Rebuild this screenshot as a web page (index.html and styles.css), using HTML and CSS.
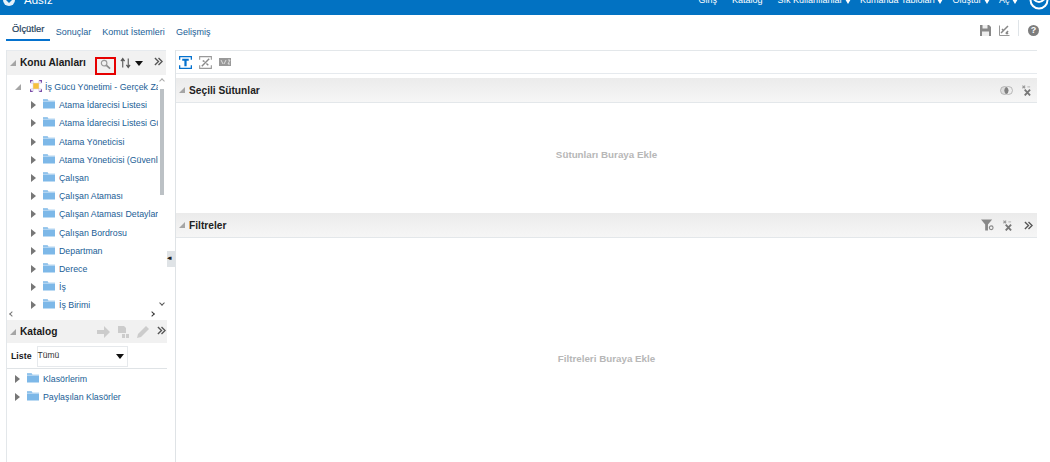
FILE: index.html
```html
<!DOCTYPE html>
<html lang="tr">
<head>
<meta charset="utf-8">
<title>Adsız</title>
<link rel="stylesheet" href="styles.css">
</head>
<body>
<svg class="defs" width="0" height="0">
  <symbol id="folder" viewBox="0 0 13 11"><path d="M0 1h5l1 1.500h7V11H0z" fill="#7db8e8"/><path d="M0 2.500h13v1H0z" fill="#cfe4f6"/></symbol>
  <symbol id="clear" viewBox="0 0 10 12"><path d="M.5 .5l3 3M3.500 .5l-3 3" stroke="#999" stroke-width="1.200" fill="none"/><path d="M3 5l6 6.500M9 5l-6 6.500" stroke="#777" stroke-width="2" fill="none"/><path d="M6 2h3" stroke="#aaa"/></symbol>
  <symbol id="dbl" viewBox="0 0 10 10"><path d="M1 1l4 4-4 4M5 1l4 4-4 4" stroke="#555" stroke-width="1.500" fill="none"/></symbol>
</svg>
<header class="topbar">
  <div class="brand"><svg class="logo" viewBox="0 0 12 12"><circle cx="6" cy="6" r="6" fill="#e4f0f9"/><path d="M3 6l3 3 3-3z" fill="#0272c2"/></svg><span class="title">Adsız</span></div>
  <nav class="topnav">
    <span class="plain">Giriş</span><span class="plain">Katalog</span><span>Sık Kullanılanlar <i class="dn"></i></span><span>Kumanda Tabloları <i class="dn"></i></span><span>Oluştur <i class="dn"></i></span><span>Aç <i class="dn"></i></span>
    <svg class="user" viewBox="0 0 20 20"><circle cx="10" cy="6" r="8.500" fill="none" stroke="#fff" stroke-width="2"/><path d="M4.500 5q5.500 6 11 0" fill="none" stroke="#fff" stroke-width="2"/></svg>
  </nav>
</header>
<div class="tabbar">
  <div class="tabs"><span class="tab on">Ölçütler</span><span class="tab">Sonuçlar</span><span class="tab">Komut İstemleri</span><span class="tab">Gelişmiş</span></div>
  <div class="tabtools">
    <svg class="ic" viewBox="0 0 11 11"><path d="M0 0h9l2 2v9H0z" fill="#888"/><path d="M2.500 0h5v3.500h-5zM2 6.500h7V11H2z" fill="#eee"/></svg>
    <svg class="ic ic2" viewBox="0 0 11 11"><path d="M.5.500v10h10" fill="none" stroke="#999"/><path d="M2 8l7-7M3 4l1 1M7 7l2 2M9 6l-2 3" stroke="#888" stroke-width="1.500" fill="none"/></svg>
    <span class="sep"></span>
    <span class="help">?</span>
  </div>
</div>
<main class="main">
  <aside class="side">
    <div class="phead">
      <span class="tri"></span><span class="ptitle">Konu Alanları</span>
      <span class="search"><svg viewBox="0 0 12 12"><circle cx="4.500" cy="4.500" r="3" fill="none" stroke="#999" stroke-width="1.300"/><path d="M7 7l4 3.500" stroke="#888" stroke-width="1.800"/></svg></span>
      <svg class="sort" viewBox="0 0 12 12"><path d="M3 11V2M1 4l2-3 2 3M9 1v9M7 8l2 3 2-3" fill="none" stroke="#555" stroke-width="1.200"/></svg>
      <i class="dnk"></i>
      <svg class="dbl" ><use href="#dbl"/></svg>
    </div>
    <div class="treebox">
      <div class="tree">
        <div class="row root"><span class="tri"></span><svg class="cube" viewBox="0 0 13 13"><path d="M.5 3V.500H3M10 .500h2.500V3M.5 10v2.500H3M10 12.500h2.500V10" fill="none" stroke="#7b4fa8" stroke-width="1.500"/><path d="M.5 3.500h12M.5 9.500h12M3.500 .5v12M9.500 .5v12" stroke="#c9b6de" stroke-width=".6"/><path d="M3.500 3.500h6v6h-6z" fill="#f5c13d"/></svg><span class="lbl">İş Gücü Yönetimi - Gerçek Zamanlı</span></div>
        <div class="row"><i class="exp"></i><svg class="fold"><use href="#folder"/></svg><span class="lbl">Atama İdarecisi Listesi</span></div>
        <div class="row"><i class="exp"></i><svg class="fold"><use href="#folder"/></svg><span class="lbl">Atama İdarecisi Listesi Güvenli</span></div>
        <div class="row"><i class="exp"></i><svg class="fold"><use href="#folder"/></svg><span class="lbl">Atama Yöneticisi</span></div>
        <div class="row"><i class="exp"></i><svg class="fold"><use href="#folder"/></svg><span class="lbl">Atama Yöneticisi (Güvenli Liste)</span></div>
        <div class="row"><i class="exp"></i><svg class="fold"><use href="#folder"/></svg><span class="lbl">Çalışan</span></div>
        <div class="row"><i class="exp"></i><svg class="fold"><use href="#folder"/></svg><span class="lbl">Çalışan Ataması</span></div>
        <div class="row"><i class="exp"></i><svg class="fold"><use href="#folder"/></svg><span class="lbl">Çalışan Ataması Detayları</span></div>
        <div class="row"><i class="exp"></i><svg class="fold"><use href="#folder"/></svg><span class="lbl">Çalışan Bordrosu</span></div>
        <div class="row"><i class="exp"></i><svg class="fold"><use href="#folder"/></svg><span class="lbl">Departman</span></div>
        <div class="row"><i class="exp"></i><svg class="fold"><use href="#folder"/></svg><span class="lbl">Derece</span></div>
        <div class="row"><i class="exp"></i><svg class="fold"><use href="#folder"/></svg><span class="lbl">İş</span></div>
        <div class="row"><i class="exp"></i><svg class="fold"><use href="#folder"/></svg><span class="lbl">İş Birimi</span></div>
      </div>
      <div class="vscroll"><span class="up"></span><span class="thumb"></span><span class="down"></span></div>
    </div>
    <div class="hscroll"><span class="lt"></span><span class="rt"></span></div>
    <div class="phead cat">
      <span class="tri"></span><span class="ptitle">Katalog</span>
      <svg class="cti first" viewBox="0 0 13 12"><path d="M0 4h7V0l6 6-6 6V8H0z" fill="#ccc"/></svg>
      <svg class="cti" viewBox="0 0 13 12"><path d="M1 0h6l2 2v5H1zM5 8h3v4H5zM9 8h3v4H9z" fill="#ccc"/></svg>
      <svg class="cti" viewBox="0 0 13 12"><path d="M9 0l3 3-8 8-4 1 1-4z" fill="#ccc"/></svg>
      <svg class="dbl"><use href="#dbl"/></svg>
    </div>
    <div class="listrow"><b>Liste</b><div class="select"><span>Tümü</span><i class="dnk"></i></div></div>
    <div class="cattree">
      <div class="row"><i class="exp"></i><svg class="fold"><use href="#folder"/></svg><span class="lbl">Klasörlerim</span></div>
      <div class="row"><i class="exp"></i><svg class="fold"><use href="#folder"/></svg><span class="lbl">Paylaşılan Klasörler</span></div>
    </div>
    <span class="splitter"></span>
  </aside>
  <section class="content">
    <div class="toolbar">
      <svg class="tb" viewBox="0 0 14 14"><path d="M.7 4V.700h12.600V4M.7 10v3.300h12.600V10" fill="none" stroke="#0572ce" stroke-width="1.400"/><path d="M3.500 3h7v2.200H8.200V11H5.800V5.200H3.500z" fill="#0572ce"/></svg>
      <svg class="tb" viewBox="0 0 14 14"><path d="M.7 4V.700h12.600V4M.7 10v3.300h12.600V10" fill="none" stroke="#999" stroke-width="1.200"/><path d="M3 11l8-8M4 5l2 1M8 8l2 2" stroke="#888" stroke-width="1.500" fill="none"/></svg>
      <svg class="tb small" viewBox="0 0 12 8"><path d="M0 0h12v8H0z" fill="#999"/><path d="M2 2l2 4M7 2L5 6M9 2h2L9 6h2" stroke="#eee" stroke-width=".8" fill="none"/></svg>
    </div>
    <div class="sechead first-sec">
      <span class="tri"></span><span class="ptitle">Seçili Sütunlar</span>
      <span class="secicons"><svg class="eye" viewBox="0 0 13 9"><circle cx="4.500" cy="4.500" r="4" fill="#ddd" stroke="#aaa" stroke-width=".8"/><circle cx="8.500" cy="4.500" r="4" fill="#eee" stroke="#aaa" stroke-width=".8"/><path d="M6.500 1a4 4 0 0 1 0 7a4 4 0 0 1 0-7z" fill="#808080"/></svg><svg class="clr"><use href="#clear"/></svg></span>
    </div>
    <div class="drop d1">Sütunları Buraya Ekle</div>
    <div class="sechead">
      <span class="tri"></span><span class="ptitle">Filtreler</span>
      <span class="secicons"><svg class="flt" viewBox="0 0 14 12"><path d="M0 0h12L7.500 5.500V12h-3V5.500z" fill="#888"/><circle cx="11" cy="9" r="2" fill="none" stroke="#888" stroke-width="1.200"/></svg><svg class="clr"><use href="#clear"/></svg><svg class="dbl"><use href="#dbl"/></svg></span>
    </div>
    <div class="drop d2">Filtreleri Buraya Ekle</div>
  </section>
</main>
</body>
</html>
```
FILE: styles.css
```css
* { box-sizing: border-box; }
html, body { margin: 0; height: 462px; overflow: hidden; background: #fff; }
body { font-family: "Liberation Sans", Arial, sans-serif; color: #145c9e; font-size: 10px; }
.defs { position: absolute; }
i { display: inline-block; }

.topbar { height: 15px; background: #0272c2; color: #fff; display: flex; justify-content: space-between; overflow: hidden; padding: 0 1px 0 3px; }
.brand { display: flex; align-items: flex-end; gap: 9px; height: 6px; }
.logo { width: 12px; height: 12px; flex: none; }
.title { font-size: 11.500px; line-height: 13px; flex: none; margin-bottom: -1px; }
.topnav { display: flex; gap: 9px; font-size: 9px; line-height: 12px; height: 6px; align-items: flex-end; }
.topnav span { white-space: nowrap; }
.topnav .plain { margin-right: 6px; }
.dn { width: 0; height: 0; border: 3px solid transparent; border-top: 5px solid #fff; border-bottom: 0; vertical-align: -1px; }
.user { width: 20px; height: 20px; align-self: flex-start; margin: -6px 0 0 2px; flex: none; overflow: visible; }

.tabbar { height: 27px; display: flex; justify-content: space-between; padding-left: 6px; }
.tabs { display: flex; height: 26px; }
.tab { padding: 11px 5.500px 0; line-height: 12px; font-size: 9px; color: #1a5e96; white-space: nowrap; }
.tab.on { color: #1f3f5c; border-bottom: 2px solid #0572ce; padding: 8px 6px 0; font-size: 9.400px; -webkit-text-stroke: .2px #1f3f5c; }
.tabtools { display: flex; align-items: flex-start; padding: 5px 11px 0 0; }
.ic { width: 11px; height: 11px; margin-top: 5px; }
.ic2 { margin-left: 8px; }
.sep { width: 1px; height: 16px; background: #dfe4e8; margin: 0 9px 0 8px; }
.help { width: 11px; height: 11px; margin-top: 5px; border-radius: 50%; background: #7d7d7d; color: #fff; font: bold 9px/11px "Liberation Sans", sans-serif; text-align: center; }

.main { display: flex; padding: 8px 13px 0 6px; height: 420px; }
.side { width: 170px; flex: none; position: relative; border-left: 1px solid #e3e7ea; border-right: 1px solid #dfe3e6; height: 420px; padding-right: 9px; }
.phead { height: 25px; background: #f1f1f1; border-top: 1px solid #e6eaee; display: flex; align-items: center; padding-left: 3px; color: #111; position: relative; }
.tri { width: 0; height: 0; flex: none; border-style: solid; border-width: 0 0 6px 6px; border-color: transparent transparent #a5a5a5 transparent; display: inline-block; }
.ptitle { font-size: 10.200px; font-weight: 700; color: #1a1a1a; margin-left: 4px; white-space: nowrap; margin-top: -1px; }
.search { width: 21px; height: 18px; border: 2px solid #e60000; margin-left: 9px; flex: none; display: flex; justify-content: center; align-items: flex-start; align-self: flex-end; }
.search svg { width: 11px; height: 11px; }
.sort { width: 11px; height: 12px; margin-left: 4px; flex: none; margin-top: -1px; }
.dnk { width: 0; height: 0; border: 4px solid transparent; border-top: 5px solid #111; border-bottom: 0; flex: none; }
.phead > .dnk { margin-left: 4px; }
.dbl { width: 9px; height: 9px; flex: none; }
.phead > .dbl { margin-left: auto; margin-right: 3px; margin-top: -3px; }

.treebox { height: 237px; display: flex; overflow: hidden; }
.tree { width: 151px; flex: none; overflow: hidden; padding-top: 3px; }
.row { height: 18.200px; display: flex; align-items: center; white-space: nowrap; font-size: 8.800px; color: #1a5e96; }
.tree .row { padding-left: 24px; }
.tree .row.root { padding-left: 8px; }
.root .tri { margin-right: 9px; }
.cube { width: 12px; height: 12px; flex: none; margin-right: 3px; margin-top: -2px; }
.exp { width: 0; height: 0; flex: none; border-style: solid; border-width: 4px 0 4px 5px; border-color: transparent transparent transparent #777; margin-right: 7px; }
.fold { width: 12px; height: 11px; flex: none; margin-right: 4px; margin-top: -3px; }
.vscroll { width: 8px; flex: none; display: flex; flex-direction: column; align-items: center; }
.up, .down { width: 4px; height: 4px; border-left: 1px solid #555; border-top: 1px solid #555; transform: rotate(45deg); flex: none; }
.up { margin-top: 4px; opacity: .5; }
.thumb { width: 4px; height: 106px; background: #bcc1c5; margin-top: 6px; flex: none; }
.down { transform: rotate(225deg); margin-top: auto; margin-bottom: 7px; }
.hscroll { height: 8px; display: flex; justify-content: space-between; padding: 0 12px 0 3px; align-items: flex-start; }
.lt, .rt { width: 4px; height: 4px; border-left: 1px solid #777; border-top: 1px solid #777; transform: rotate(-45deg); }
.rt { transform: rotate(135deg); border-color: #333; }
.phead.cat { height: 23px; border-top: 0; margin-right: -1px; }
.cti { width: 13px; height: 12px; flex: none; margin-left: 7px; }
.cti.first { margin-left: 40px; }
.phead.cat > .dbl { margin-right: 1px; }
.listrow { height: 25px; display: flex; align-items: center; padding-left: 4px; border-bottom: 1px solid #dfe3e6; margin: 1px -1px 0 0; }
.listrow b { font-size: 8.800px; color: #1a1a1a; }
.select { width: 91px; height: 21px; margin-left: 5px; border: 1px solid #e6e9ec; display: flex; align-items: center; justify-content: space-between; padding: 0 3px 3px 0; color: #333; font-size: 8.500px; }
.select .dnk { margin-top: 3px; }
.cattree { padding-top: 1px; }
.cattree .row { padding-left: 8px; }
.cattree .exp { margin-right: 7px; }
.splitter { position: absolute; right: 0; top: 201px; width: 8px; height: 16px; background: #dfe3e6; }
.splitter::before { content: "◂◂"; position: absolute; left: 0; top: 2px; font-size: 7px; letter-spacing: -3px; color: #222; line-height: 10px; }

.content { flex: 1; min-width: 0; }
.toolbar { height: 24px; border-top: 1px solid #e3e7ea; border-bottom: 1px solid #e6eaee; display: flex; align-items: center; padding: 0 3px; gap: 7px; }
.tb { width: 13px; height: 13px; flex: none; }
.tb.small { width: 12px; height: 8px; }
.sechead { height: 25px; background: linear-gradient(#ebebeb, #f6f6f6); border-bottom: 1px solid #e3e7ea; display: flex; align-items: center; padding: 0 4px 0 3px; }
.first-sec { margin-top: 4px; }
.sechead .ptitle { color: #222; margin-left: 4px; margin-top: 0; }
.secicons { margin-left: auto; display: flex; align-items: center; gap: 9px; }
.eye { width: 13px; height: 9px; }
.clr { width: 9px; height: 11px; margin-right: 2px; }
.flt { width: 13px; height: 12px; }
.secicons .dbl { width: 9px; height: 9px; margin-left: 1px; }
.drop { display: flex; align-items: flex-start; justify-content: center; color: #b7b7b7; font-weight: 700; font-size: 9.800px; }
.d1 { height: 110px; padding-top: 46px; }
.d2 { height: 224px; padding-top: 115px; }
```
